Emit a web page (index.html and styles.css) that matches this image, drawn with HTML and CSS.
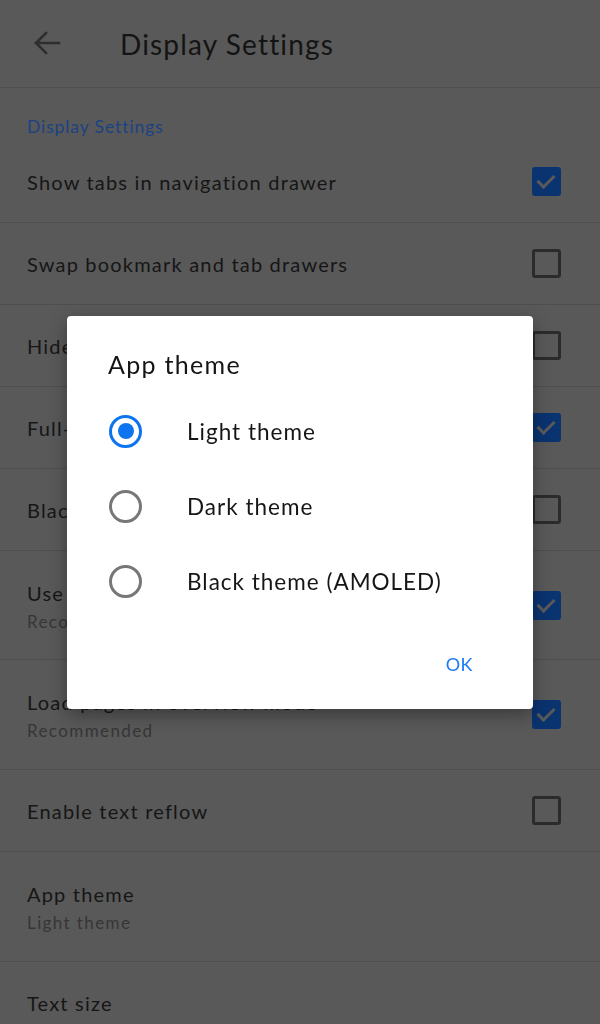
FILE: index.html
```html
<!DOCTYPE html>
<html lang="en">
<head>
<meta charset="utf-8">
<title>Display Settings</title>
<link rel="stylesheet" href="styles.css">
</head>
<body>
<div class="app">
  <header class="toolbar">
    <svg class="back" width="28" height="24" viewBox="0 0 28 24" aria-hidden="true">
      <path d="M26 12H3 M13 2L3 12L13 22" fill="none" stroke="#2e2e2e" stroke-width="2.6" stroke-linecap="square"/>
    </svg>
    <h1 class="title">Display Settings</h1>
  </header>
  <div class="category">Display Settings</div>
  <ul class="prefs">
    <li class="row"><div class="text"><span class="label">Show tabs in navigation drawer</span></div><span class="box checked"></span></li>
    <li class="row"><div class="text"><span class="label">Swap bookmark and tab drawers</span></div><span class="box"></span></li>
    <li class="row"><div class="text"><span class="label">Hide status bar</span></div><span class="box"></span></li>
    <li class="row"><div class="text"><span class="label">Full-screen mode</span></div><span class="box checked"></span></li>
    <li class="row"><div class="text"><span class="label">Black status bar</span></div><span class="box"></span></li>
    <li class="row tall"><div class="text"><span class="label">Use wide viewport</span><span class="summary">Recommended</span></div><span class="box checked"></span></li>
    <li class="row tall"><div class="text"><span class="label">Load pages in overview mode</span><span class="summary">Recommended</span></div><span class="box checked"></span></li>
    <li class="row"><div class="text"><span class="label">Enable text reflow</span></div><span class="box"></span></li>
    <li class="row tall"><div class="text"><span class="label">App theme</span><span class="summary">Light theme</span></div></li>
    <li class="row"><div class="text"><span class="label">Text size</span></div></li>
  </ul>
</div>
<div class="overlay">
  <div class="dialog">
    <h2 class="dialog-title">App theme</h2>
    <ul class="options">
      <li class="option"><span class="radio on"></span><span class="opt-label">Light theme</span></li>
      <li class="option"><span class="radio"></span><span class="opt-label">Dark theme</span></li>
      <li class="option"><span class="radio"></span><span class="opt-label">Black theme (AMOLED)</span></li>
    </ul>
    <div class="actions"><span class="ok">OK</span></div>
  </div>
</div>
</body>
</html>
```

FILE: styles.css
```css
html, body {
  margin: 0;
  padding: 0;
  height: 100%;
  overflow: hidden;
}
body {
  background: #595959;
  font-family: "Lato", "Noto Sans", sans-serif;
  color: #161616;
}
.app {
  display: flex;
  flex-direction: column;
}
.toolbar {
  height: 87px;
  border-bottom: 1px solid #505050;
  display: flex;
  align-items: center;
  box-sizing: content-box;
}
.back {
  margin-left: 33px;
  margin-top: -2px;
}
.title {
  margin: 0 0 0 59px;
  font-size: 28px;
  font-weight: 400;
  letter-spacing: 1.15px;
  color: #141414;
}
.category {
  height: 53px;
  box-sizing: border-box;
  padding: 28px 0 0 27px;
  font-size: 17.5px;
  letter-spacing: 0.9px;
  color: #1c4283;
}
.prefs {
  list-style: none;
  margin: 0;
  padding: 0;
}
.row {
  height: 82px;
  box-sizing: border-box;
  border-bottom: 1px solid #4e4e4e;
  display: flex;
  align-items: center;
  padding: 0 39px 0 27px;
}
.row.tall {
  height: 109px;
}
.row:nth-child(7), .row:nth-child(9) {
  height: 110px;
}
.text {
  flex: 1;
  display: flex;
  flex-direction: column;
  gap: 6px;
}
.label {
  font-size: 20px;
  letter-spacing: 1.2px;
  color: #161616;
}
.summary {
  font-size: 17px;
  letter-spacing: 1.4px;
  color: #363636;
}
.row.tall .text {
  margin-top: 2px;
}
.box {
  width: 29px;
  height: 29px;
  box-sizing: border-box;
  border: 3px solid #2b2b2b;
  border-radius: 3px;
  position: relative;
}
.box.checked {
  border: none;
  background: #0a3470;
}
.box.checked::after {
  content: "";
  position: absolute;
  left: 9px;
  top: 4px;
  width: 7px;
  height: 14px;
  border-right: 3px solid #5a5a5a;
  border-bottom: 3px solid #5a5a5a;
  transform: rotate(45deg);
  transform-origin: center;
}
.overlay {
  position: fixed;
  inset: 0;
  display: flex;
  align-items: center;
  justify-content: center;
}
.dialog {
  width: 466px;
  height: 393px;
  background: #ffffff;
  border-radius: 4px;
  box-shadow: 0 6px 18px rgba(0, 0, 0, 0.35);
  box-sizing: border-box;
  display: flex;
  flex-direction: column;
}
.dialog-title {
  margin: 32px 0 0 41px;
  font-size: 25px;
  font-weight: 400;
  letter-spacing: 1.3px;
  color: #151515;
  line-height: 32px;
}
.options {
  list-style: none;
  margin: 14px 0 0 0;
  padding: 0;
}
.option {
  height: 75px;
  display: flex;
  align-items: center;
  padding-left: 42px;
}
.radio {
  width: 33px;
  height: 33px;
  box-sizing: border-box;
  border: 3px solid #777777;
  border-radius: 50%;
  position: relative;
  flex: none;
}
.radio.on {
  border-color: #0c74ee;
}
.radio.on::after {
  content: "";
  position: absolute;
  left: 5.5px;
  top: 5.5px;
  width: 16px;
  height: 16px;
  border-radius: 50%;
  background: #0c74ee;
}
.opt-label {
  margin-left: 45px;
  font-size: 22.5px;
  letter-spacing: 1px;
  color: #161616;
}
.actions {
  margin-top: auto;
  height: 56px;
  display: flex;
  align-items: flex-start;
  justify-content: flex-end;
  padding-right: 60px;
}
.ok {
  font-size: 18px;
  color: #1c7cf2;
  letter-spacing: 0.5px;
}
```
